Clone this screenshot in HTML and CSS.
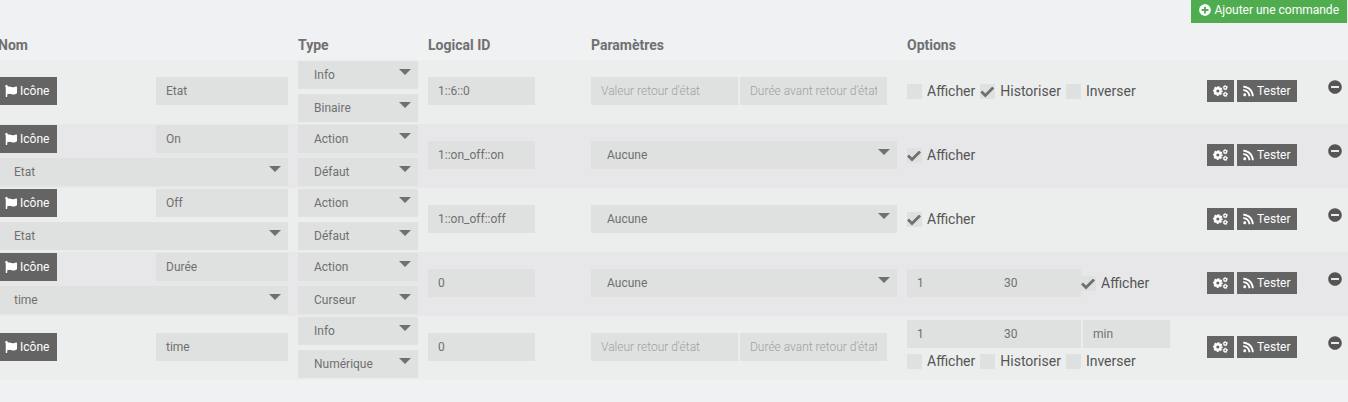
FILE: index.html
```
<!DOCTYPE html>
<html lang="fr">
<head>
<meta charset="utf-8">
<title>Commandes</title>
<link rel="stylesheet" href="styles.css">
</head>
<body>
<svg class="sprite" aria-hidden="true">
  <symbol id="flag" viewBox="0 0 512 512"><path d="M349.565 98.783C295.978 98.783 251.721 64 184.348 64c-24.955 0-47.309 4.384-68.045 12.013a55.947 55.947 0 0 0 3.586-23.562C118.117 24.015 94.806 1.206 66.338.048 34.345-1.254 8 24.296 8 56c0 19.026 9.497 35.825 24 45.945V488c0 13.255 10.745 24 24 24h16c13.255 0 24-10.745 24-24v-94.4c28.311-12.064 63.582-22.122 114.435-22.122 53.588 0 97.844 34.783 165.217 34.783 48.169 0 86.667-16.294 122.505-40.858C506.84 359.452 512 349.571 512 339.045v-243.1c0-23.393-24.269-38.87-45.485-29.016-34.338 15.948-76.454 31.854-116.95 31.854z"/></symbol>
  <symbol id="plus" viewBox="0 0 512 512"><path d="M256 8C119 8 8 119 8 256s111 248 248 248 248-111 248-248S393 8 256 8zm144 276c0 6.600-5.400 12-12 12h-92v92c0 6.600-5.400 12-12 12h-56c-6.600 0-12-5.400-12-12v-92h-92c-6.600 0-12-5.400-12-12v-56c0-6.600 5.400-12 12-12h92v-92c0-6.600 5.400-12 12-12h56c6.600 0 12 5.400 12 12v92h92c6.600 0 12 5.400 12 12v56z"/></symbol>
  <symbol id="minus" viewBox="0 0 512 512"><path d="M256 8C119 8 8 119 8 256s111 248 248 248 248-111 248-248S393 8 256 8zM124 296c-6.600 0-12-5.400-12-12v-56c0-6.600 5.400-12 12-12h264c6.600 0 12 5.400 12 12v56c0 6.600-5.400 12-12 12H124z"/></symbol>
  <symbol id="rss" viewBox="0 0 448 512"><path d="M128.081 415.959c0 35.369-28.672 64.041-64.041 64.041S0 451.328 0 415.959s28.672-64.041 64.041-64.041 64.040 28.673 64.040 64.041zm175.660 47.250c-8.354-154.600-132.185-278.587-286.950-286.950C7.656 175.765 0 183.105 0 192.253v48.069c0 8.415 6.490 15.472 14.887 16.018 111.832 7.284 201.473 96.702 208.772 208.772.547 8.397 7.604 14.887 16.018 14.887h48.069c9.149.001 16.489-7.655 15.995-16.790zm144.249.288C439.596 229.677 251.465 40.445 16.503 32.010 7.473 31.686 0 38.981 0 48.016v48.068c0 8.625 6.835 15.645 15.453 15.999 191.179 7.839 344.627 161.316 352.465 352.465.353 8.618 7.373 15.453 15.999 15.453h48.068c9.034-.001 16.329-7.474 16.005-16.504z"/></symbol>
  <symbol id="cogs" viewBox="0 0 640 512">
    <g fill="none" stroke="currentColor">
      <circle cx="208" cy="256" r="118" stroke-width="100"/>
      <circle cx="208" cy="256" r="180" stroke-width="56" stroke-dasharray="90 51.370" stroke-dashoffset="45"/>
      <circle cx="524" cy="112" r="60" stroke-width="54"/>
      <circle cx="524" cy="112" r="94" stroke-width="34" stroke-dasharray="54 44.440" stroke-dashoffset="27"/>
      <circle cx="524" cy="400" r="60" stroke-width="54"/>
      <circle cx="524" cy="400" r="94" stroke-width="34" stroke-dasharray="54 44.440" stroke-dashoffset="27"/>
    </g>
  </symbol>
</svg>

<header class="toolbar">
  <button class="btn btn-add" type="button"><svg class="icon"><use href="#plus"/></svg>Ajouter une commande</button>
</header>

<main>
<table class="commands">
  <colgroup><col class="col-name"><col class="col-type"><col class="col-id"><col class="col-params"><col><col class="col-actions"></colgroup>
  <thead>
    <tr><th>Nom</th><th>Type</th><th>Logical ID</th><th>Paramètres</th><th>Options</th><th></th></tr>
  </thead>
  <tbody>
    <tr>
      <td><div class="name-line"><button class="btn btn-icon" type="button"><svg class="icon"><use href="#flag"/></svg>Icône</button><input class="field name" aria-label="Nom" value="Etat"></div></td>
      <td><div class="stack"><select class="field" aria-label="Type"><option>Info</option></select><select class="field" aria-label="Sous-type"><option>Binaire</option></select></div></td>
      <td><input class="field logical" aria-label="Logical ID" value="1::6::0"></td>
      <td><div class="pair"><input class="field" aria-label="Valeur retour d'état" placeholder="Valeur retour d'état"><input class="field" aria-label="Durée avant retour d'état" placeholder="Durée avant retour d'état"></div></td>
      <td><div class="checks"><label><input type="checkbox">Afficher</label><label><input type="checkbox" checked>Historiser</label><label><input type="checkbox">Inverser</label></div></td>
      <td><div class="actions"><button class="btn" type="button" aria-label="Configurer"><svg class="icon cogs"><use href="#cogs"/></svg></button><button class="btn" type="button"><svg class="icon rss"><use href="#rss"/></svg>Tester</button><button class="remove" type="button" aria-label="Supprimer"><svg class="icon"><use href="#minus"/></svg></button></div></td>
    </tr>
    <tr>
      <td><div class="stack"><div class="name-line"><button class="btn btn-icon" type="button"><svg class="icon"><use href="#flag"/></svg>Icône</button><input class="field name" aria-label="Nom" value="On"></div><select class="field" aria-label="Info liée"><option>Etat</option></select></div></td>
      <td><div class="stack"><select class="field" aria-label="Type"><option>Action</option></select><select class="field" aria-label="Sous-type"><option>Défaut</option></select></div></td>
      <td><input class="field logical" aria-label="Logical ID" value="1::on_off::on"></td>
      <td><select class="field" aria-label="Paramètre"><option>Aucune</option></select></td>
      <td><div class="checks"><label><input type="checkbox" checked>Afficher</label></div></td>
      <td><div class="actions"><button class="btn" type="button" aria-label="Configurer"><svg class="icon cogs"><use href="#cogs"/></svg></button><button class="btn" type="button"><svg class="icon rss"><use href="#rss"/></svg>Tester</button><button class="remove" type="button" aria-label="Supprimer"><svg class="icon"><use href="#minus"/></svg></button></div></td>
    </tr>
    <tr>
      <td><div class="stack"><div class="name-line"><button class="btn btn-icon" type="button"><svg class="icon"><use href="#flag"/></svg>Icône</button><input class="field name" aria-label="Nom" value="Off"></div><select class="field" aria-label="Info liée"><option>Etat</option></select></div></td>
      <td><div class="stack"><select class="field" aria-label="Type"><option>Action</option></select><select class="field" aria-label="Sous-type"><option>Défaut</option></select></div></td>
      <td><input class="field logical" aria-label="Logical ID" value="1::on_off::off"></td>
      <td><select class="field" aria-label="Paramètre"><option>Aucune</option></select></td>
      <td><div class="checks"><label><input type="checkbox" checked>Afficher</label></div></td>
      <td><div class="actions"><button class="btn" type="button" aria-label="Configurer"><svg class="icon cogs"><use href="#cogs"/></svg></button><button class="btn" type="button"><svg class="icon rss"><use href="#rss"/></svg>Tester</button><button class="remove" type="button" aria-label="Supprimer"><svg class="icon"><use href="#minus"/></svg></button></div></td>
    </tr>
    <tr>
      <td><div class="stack"><div class="name-line"><button class="btn btn-icon" type="button"><svg class="icon"><use href="#flag"/></svg>Icône</button><input class="field name" aria-label="Nom" value="Durée"></div><select class="field" aria-label="Info liée"><option>time</option></select></div></td>
      <td><div class="stack"><select class="field" aria-label="Type"><option>Action</option></select><select class="field" aria-label="Sous-type"><option>Curseur</option></select></div></td>
      <td><input class="field logical" aria-label="Logical ID" value="0"></td>
      <td><select class="field" aria-label="Paramètre"><option>Aucune</option></select></td>
      <td><div class="range"><input class="field" aria-label="Min" value="1"><input class="field" aria-label="Max" value="30"><div class="checks"><label><input type="checkbox" checked>Afficher</label></div></div></td>
      <td><div class="actions"><button class="btn" type="button" aria-label="Configurer"><svg class="icon cogs"><use href="#cogs"/></svg></button><button class="btn" type="button"><svg class="icon rss"><use href="#rss"/></svg>Tester</button><button class="remove" type="button" aria-label="Supprimer"><svg class="icon"><use href="#minus"/></svg></button></div></td>
    </tr>
    <tr>
      <td><div class="name-line"><button class="btn btn-icon" type="button"><svg class="icon"><use href="#flag"/></svg>Icône</button><input class="field name" aria-label="Nom" value="time"></div></td>
      <td><div class="stack"><select class="field" aria-label="Type"><option>Info</option></select><select class="field" aria-label="Sous-type"><option>Numérique</option></select></div></td>
      <td><input class="field logical" aria-label="Logical ID" value="0"></td>
      <td><div class="pair"><input class="field" aria-label="Valeur retour d'état" placeholder="Valeur retour d'état"><input class="field" aria-label="Durée avant retour d'état" placeholder="Durée avant retour d'état"></div></td>
      <td><div class="stack options"><div class="range"><input class="field" aria-label="Min" value="1"><input class="field" aria-label="Max" value="30"><input class="field unit" aria-label="Unité" value="min"></div><div class="checks"><label><input type="checkbox">Afficher</label><label><input type="checkbox">Historiser</label><label><input type="checkbox">Inverser</label></div></div></td>
      <td><div class="actions"><button class="btn" type="button" aria-label="Configurer"><svg class="icon cogs"><use href="#cogs"/></svg></button><button class="btn" type="button"><svg class="icon rss"><use href="#rss"/></svg>Tester</button><button class="remove" type="button" aria-label="Supprimer"><svg class="icon"><use href="#minus"/></svg></button></div></td>
    </tr>
  </tbody>
</table>
</main>
</body>
</html>
```

FILE: styles.css
```
* { box-sizing: border-box; }

body {
  margin: 0;
  overflow-x: hidden;
  background: #eff1f3;
  color: #555;
  font: 14px/20px Roboto, sans-serif;
}

.sprite { position: absolute; width: 0; height: 0; }

.icon {
  flex: none;
  width: 12px;
  height: 12px;
  fill: currentColor;
}
.icon.cogs { width: 15px; }
.icon.rss { width: 11px; }

.toolbar {
  display: flex;
  justify-content: flex-end;
  padding-right: 1px;
}

.btn {
  display: inline-flex;
  align-items: center;
  gap: 3px;
  height: 22px;
  padding: 0 6px;
  border: 0;
  background: #646464;
  color: #fff;
  font: 12px/20px Roboto, sans-serif;
  white-space: nowrap;
}
.btn-icon { height: 28px; padding: 0 8px 0 7px; }
.btn-add {
  height: 23px;
  padding: 0 8px 4px;
  background: #4fad50;
}

.commands {
  width: calc(100% + 7px);
  margin: 12px 0 0 -7px;
  border-collapse: collapse;
  table-layout: fixed;
}
.col-name { width: 300px; }
.col-type { width: 130px; }
.col-id { width: 163px; }
.col-params { width: 316px; }
.col-actions { width: 146px; }

th {
  height: 25px;
  padding: 0 5px 5px;
  color: #707070;
  font-weight: 700;
  text-align: left;
}
td {
  height: 64px;
  padding: 0 5px 2px;
  vertical-align: middle;
}
td:last-child { padding-right: 6px; }
tbody tr:nth-child(odd) { background: #eceeed; }
tbody tr:nth-child(even) { background: #e7e7e9; }

.stack { display: grid; gap: 5px; }
.stack.options { gap: 3px; padding-bottom: 3px; }
.name-line { display: flex; justify-content: space-between; }
.pair { display: grid; grid-template-columns: 147px 147px; gap: 2px; }

.field {
  display: block;
  width: 100%;
  min-width: 0;
  height: 28px;
  padding: 0 10px;
  border: 0;
  border-radius: 0;
  background: #dfe1e0;
  color: #707070;
  font: 12px/20px Roboto, sans-serif;
}
.field::placeholder { color: #a0a0a0; font-weight: 300; opacity: 1; }
.name { width: 132px; }
.logical { width: 107px; }

select.field {
  appearance: none;
  padding: 0 24px 0 16px;
  background: #dfe1e0 url("data:image/svg+xml,%3Csvg xmlns='http://www.w3.org/2000/svg' viewBox='0 0 12 6'%3E%3Cpath fill='%23707070' d='M0 0h12L6 6z'/%3E%3C/svg%3E") no-repeat right 7px top 8px / 12px 6px;
}

.range { display: flex; align-items: center; }
.range .field { width: 87px; }
.range .unit { margin-left: 2px; }

.checks { display: flex; gap: 5px; }
.checks label { display: flex; align-items: center; gap: 5px; }
.checks input {
  appearance: none;
  width: 15px;
  height: 15px;
  margin: 0;
  background: #dfe1e0;
}
.checks input:checked::before {
  content: "";
  display: block;
  width: 14px;
  height: 11px;
  margin-top: 3px;
  background: #707070;
  clip-path: polygon(0 6px, 2px 4px, 5px 7px, 12px 0, 14px 2px, 5px 11px);
}

.actions { display: flex; align-items: flex-start; gap: 3px; }
.remove {
  display: flex;
  margin-left: auto;
  padding: 0;
  border: 0;
  background: none;
  color: #555;
}
.remove .icon { width: 14px; height: 14px; }
```
